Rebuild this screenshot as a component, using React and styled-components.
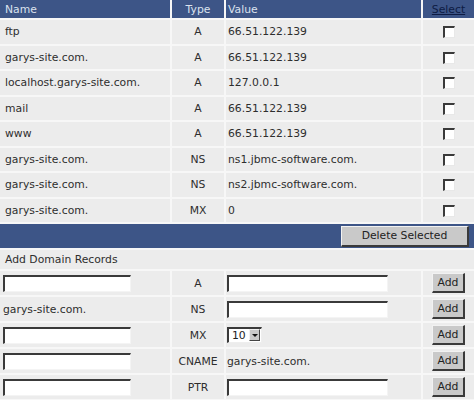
import styled, { createGlobalStyle } from "styled-components";

const GlobalStyle = createGlobalStyle`
  html, body {
    margin: 0;
    padding: 0;
    background: #f7f7f7;
  }
  body {
    font-family: "DejaVu Sans", Verdana, sans-serif;
    font-size: 10.8px;
    color: #2e2e2e;
    overflow: hidden;
  }
`;

const records = [
  { name: "ftp", type: "A", value: "66.51.122.139" },
  { name: "garys-site.com.", type: "A", value: "66.51.122.139" },
  { name: "localhost.garys-site.com.", type: "A", value: "127.0.0.1" },
  { name: "mail", type: "A", value: "66.51.122.139" },
  { name: "www", type: "A", value: "66.51.122.139" },
  { name: "garys-site.com.", type: "NS", value: "ns1.jbmc-software.com." },
  { name: "garys-site.com.", type: "NS", value: "ns2.jbmc-software.com." },
  { name: "garys-site.com.", type: "MX", value: "0" },
];

const Wrap = styled.div`
  margin: -2px;
`;

const Table = styled.table`
  width: 478px;
  table-layout: fixed;
  border-collapse: separate;
  border-spacing: 2px;
`;

const HeadCell = styled.th`
  height: 18px;
  padding: 0 ${(p) => (p.$left ? "2px" : "0")} 0 ${(p) => p.$pad || "0"};
  background: #3d5587;
  color: #dbe2ee;
  font-weight: normal;
  text-align: ${(p) => (p.$left ? "left" : "center")};
  white-space: nowrap;
`;

const SelectLink = styled.a`
  color: #0e1c44;
  text-decoration: underline;
  cursor: pointer;
`;

const Cell = styled.td`
  height: ${(p) => p.$h || "23.5px"};
  padding: 0 0 0 ${(p) => p.$pad || "0"};
  background: #ececec;
  text-align: ${(p) => (p.$center ? "center" : "left")};
  vertical-align: middle;
  white-space: nowrap;
`;

const BarCell = styled.td`
  height: 24px;
  padding: 0 5px 0 0;
  background: #3d5587;
  text-align: right;
  vertical-align: middle;
`;

const Button = styled.button`
  font-family: inherit;
  font-size: 10.8px;
  color: #222;
  background: #c9c9c9;
  border-style: solid;
  border-width: 1px 2px 2px 1px;
  border-color: #f2f2f2 #3a3a3a #3a3a3a #f2f2f2;
  padding: 0;
  width: ${(p) => p.$w};
  height: ${(p) => p.$hgt || "20px"};
  vertical-align: middle;
`;

const Check = styled.input.attrs({ type: "checkbox" })`
  appearance: none;
  margin: 0;
  width: 12px;
  height: 12px;
  box-sizing: border-box;
  background: #fff;
  border-style: solid;
  border-width: 2px 1px 1px 2px;
  border-color: #3a3a3a #e8e8e8 #e8e8e8 #3a3a3a;
  vertical-align: middle;
`;

const TextBox = styled.input.attrs({ type: "text" })`
  box-sizing: border-box;
  width: ${(p) => p.$w};
  height: 17px;
  margin: 0;
  padding: 0 2px;
  background: #fff;
  border-style: solid;
  border-width: 2px 1px 1px 2px;
  border-color: #3a3a3a #f4f4f4 #f4f4f4 #3a3a3a;
  font-family: inherit;
  font-size: 10.8px;
  vertical-align: middle;
`;

const DropWrap = styled.span`
  position: relative;
  display: inline-block;
  vertical-align: middle;
`;

const Drop = styled.select`
  appearance: none;
  box-sizing: border-box;
  width: 35px;
  height: 16px;
  margin: 0;
  padding: 0 0 0 3px;
  background: #fff;
  border-style: solid;
  border-width: 2px 1px 1px 2px;
  border-color: #3a3a3a #eee #eee #3a3a3a;
  font-family: inherit;
  font-size: 10.8px;
  color: #222;
  display: block;
`;

const DropArrow = styled.span`
  position: absolute;
  right: 2px;
  top: 2px;
  width: 11px;
  height: 12px;
  box-sizing: border-box;
  background: #c8c8c8;
  border-style: solid;
  border-width: 1px;
  border-color: #f0f0f0 #444 #444 #f0f0f0;
  pointer-events: none;
  &::after {
    content: "";
    position: absolute;
    left: 2px;
    top: 4px;
    border-left: 3px solid transparent;
    border-right: 3px solid transparent;
    border-top: 3px solid #111;
  }
`;

function AddRow({ type, name, value }) {
  return (
    <tr>
      <Cell $h="24px" $pad="3px">
        {name ? name : <TextBox $w="128px" />}
      </Cell>
      <Cell $h="24px" $center>
        {type}
      </Cell>
      <Cell $h="24px" $pad="1px">
        {value}
      </Cell>
      <Cell $h="24px" $center>
        <Button $w="33px">Add</Button>
      </Cell>
    </tr>
  );
}

export default function App() {
  return (
    <>
      <GlobalStyle />
      <Wrap>
        <Table>
          <colgroup>
            <col style={{ width: 170 }} />
            <col style={{ width: 52 }} />
            <col style={{ width: 195 }} />
            <col style={{ width: 51 }} />
          </colgroup>
          <thead>
            <tr>
              <HeadCell $left $pad="5px">Name</HeadCell>
              <HeadCell>Type</HeadCell>
              <HeadCell $left $pad="2px">Value</HeadCell>
              <HeadCell>
                <SelectLink>Select</SelectLink>
              </HeadCell>
            </tr>
          </thead>
          <tbody>
            {records.map((r, i) => (
              <tr key={i}>
                <Cell $pad="5px">{r.name}</Cell>
                <Cell $center>{r.type}</Cell>
                <Cell $pad="2px">{r.value}</Cell>
                <Cell $center>
                  <Check />
                </Cell>
              </tr>
            ))}
            <tr>
              <BarCell colSpan={4}>
                <Button $w="128px" $hgt="21px">Delete Selected</Button>
              </BarCell>
            </tr>
            <tr>
              <Cell colSpan={4} $h="19px" $pad="5px">
                Add Domain Records
              </Cell>
            </tr>
            <AddRow type="A" value={<TextBox $w="161px" />} />
            <AddRow type="NS" name="garys-site.com." value={<TextBox $w="161px" />} />
            <AddRow
              type="MX"
              value={
                <DropWrap>
                  <Drop defaultValue="10">
                    <option value="10">10</option>
                    <option value="20">20</option>
                    <option value="30">30</option>
                  </Drop>
                  <DropArrow />
                </DropWrap>
              }
            />
            <AddRow type="CNAME" value="garys-site.com." />
            <AddRow type="PTR" value={<TextBox $w="161px" />} />
          </tbody>
        </Table>
      </Wrap>
    </>
  );
}
